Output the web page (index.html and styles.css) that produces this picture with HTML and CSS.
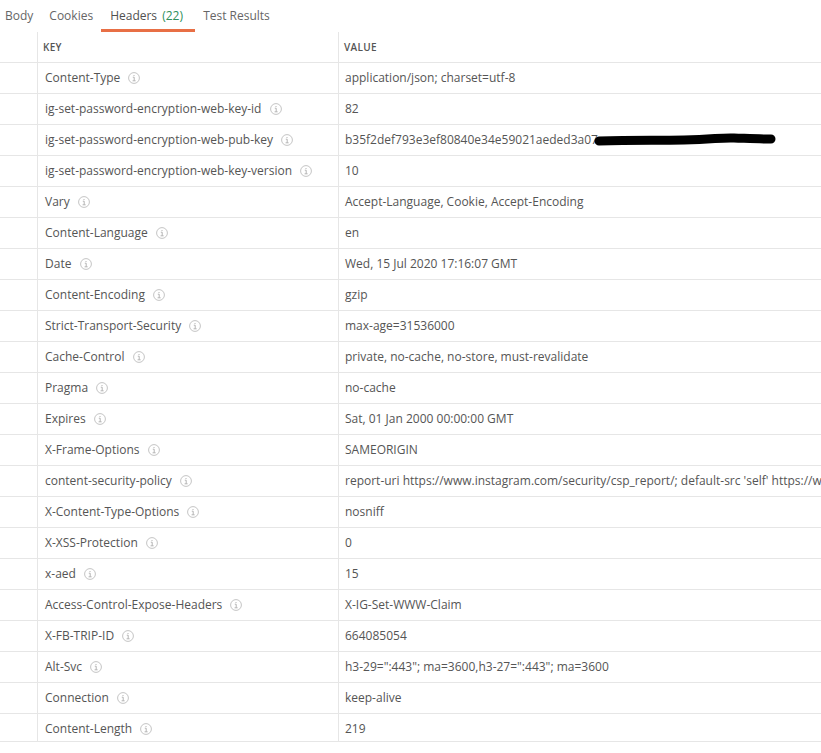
FILE: index.html

```html
<!DOCTYPE html>
<html lang="en">
<head>
  <meta charset="UTF-8">
  <meta name="viewport" content="width=device-width, initial-scale=1.0">
  <title>Response Headers</title>
  <link rel="stylesheet" href="styles.css">
</head>
<body>
  <svg width="0" height="0" class="defs">
    <symbol id="info" viewBox="0 0 12 12">
      <circle cx="6" cy="6" r="5.4" fill="none" stroke="#c4c4c4" stroke-width="1"/>
      <path d="M4.8 5.2H6.2V8.8M4.6 8.8H7.6M6 3V4" fill="none" stroke="#b4b4b4" stroke-width="1"/>
    </symbol>
  </svg>

  <nav class="tabs">
    <a class="tab">Body</a>
    <a class="tab">Cookies</a>
    <a class="tab active">Headers <span class="count">(22)</span></a>
    <a class="tab">Test Results</a>
  </nav>

  <div class="table">
    <div class="row head">
      <div class="gutter"></div>
      <div class="key">KEY</div>
      <div class="value">VALUE</div>
    </div>
    <div class="row"><div class="gutter"></div><div class="key">Content-Type <svg class="info"><use href="#info"/></svg></div><div class="value">application/json; charset=utf-8</div></div>
    <div class="row"><div class="gutter"></div><div class="key">ig-set-password-encryption-web-key-id <svg class="info"><use href="#info"/></svg></div><div class="value">82</div></div>
    <div class="row"><div class="gutter"></div><div class="key">ig-set-password-encryption-web-pub-key <svg class="info"><use href="#info"/></svg></div>
      <div class="value redacted">b35f2def793e3ef80840e34e59021aeded3a07
        <svg class="scribble" width="184" height="16" viewBox="0 0 184 16">
          <path d="M5 9C40 8 60 8.5 90 8S125 5.5 140 6S165 7 177 7" fill="none" stroke="#000" stroke-width="9" stroke-linecap="round"/>
        </svg>
      </div>
    </div>
    <div class="row"><div class="gutter"></div><div class="key">ig-set-password-encryption-web-key-version <svg class="info"><use href="#info"/></svg></div><div class="value">10</div></div>
    <div class="row"><div class="gutter"></div><div class="key">Vary <svg class="info"><use href="#info"/></svg></div><div class="value">Accept-Language, Cookie, Accept-Encoding</div></div>
    <div class="row"><div class="gutter"></div><div class="key">Content-Language <svg class="info"><use href="#info"/></svg></div><div class="value">en</div></div>
    <div class="row"><div class="gutter"></div><div class="key">Date <svg class="info"><use href="#info"/></svg></div><div class="value">Wed, 15 Jul 2020 17:16:07 GMT</div></div>
    <div class="row"><div class="gutter"></div><div class="key">Content-Encoding <svg class="info"><use href="#info"/></svg></div><div class="value">gzip</div></div>
    <div class="row"><div class="gutter"></div><div class="key">Strict-Transport-Security <svg class="info"><use href="#info"/></svg></div><div class="value">max-age=31536000</div></div>
    <div class="row"><div class="gutter"></div><div class="key">Cache-Control <svg class="info"><use href="#info"/></svg></div><div class="value">private, no-cache, no-store, must-revalidate</div></div>
    <div class="row"><div class="gutter"></div><div class="key">Pragma <svg class="info"><use href="#info"/></svg></div><div class="value">no-cache</div></div>
    <div class="row"><div class="gutter"></div><div class="key">Expires <svg class="info"><use href="#info"/></svg></div><div class="value">Sat, 01 Jan 2000 00:00:00 GMT</div></div>
    <div class="row"><div class="gutter"></div><div class="key">X-Frame-Options <svg class="info"><use href="#info"/></svg></div><div class="value">SAMEORIGIN</div></div>
    <div class="row"><div class="gutter"></div><div class="key">content-security-policy <svg class="info"><use href="#info"/></svg></div><div class="value">report-uri https://www.instagram.com/security/csp_report/; default-src 'self' https://w</div></div>
    <div class="row"><div class="gutter"></div><div class="key">X-Content-Type-Options <svg class="info"><use href="#info"/></svg></div><div class="value">nosniff</div></div>
    <div class="row"><div class="gutter"></div><div class="key">X-XSS-Protection <svg class="info"><use href="#info"/></svg></div><div class="value">0</div></div>
    <div class="row"><div class="gutter"></div><div class="key">x-aed <svg class="info"><use href="#info"/></svg></div><div class="value">15</div></div>
    <div class="row"><div class="gutter"></div><div class="key">Access-Control-Expose-Headers <svg class="info"><use href="#info"/></svg></div><div class="value">X-IG-Set-WWW-Claim</div></div>
    <div class="row"><div class="gutter"></div><div class="key">X-FB-TRIP-ID <svg class="info"><use href="#info"/></svg></div><div class="value">664085054</div></div>
    <div class="row"><div class="gutter"></div><div class="key">Alt-Svc <svg class="info"><use href="#info"/></svg></div><div class="value">h3-29=":443"; ma=3600,h3-27=":443"; ma=3600</div></div>
    <div class="row"><div class="gutter"></div><div class="key">Connection <svg class="info"><use href="#info"/></svg></div><div class="value">keep-alive</div></div>
    <div class="row last"><div class="gutter"></div><div class="key">Content-Length <svg class="info"><use href="#info"/></svg></div><div class="value">219</div></div>
  </div>
</body>
</html>
```

FILE: styles.css

```css
html, body {
  margin: 0;
  padding: 0;
  background-color: #fff;
  overflow: hidden;
}

body {
  font-family: "Open Sans", "Noto Sans", sans-serif;
  font-size: 12px;
  color: #555;
  height: 753px;
}

.defs {
  display: block;
  height: 0;
}

.tabs {
  display: flex;
  height: 32px;
  padding-left: 5px;
  gap: 16px;
  color: #666;
}

.tab {
  height: 32px;
  line-height: 32px;
  box-sizing: border-box;
}

.tab.active {
  color: #505050;
  margin: 0 -8px;
  padding: 0 9px;
  border-bottom: 3px solid #e86f45;
  width: 94px;
}

.count {
  color: #2f8f5b;
  margin-left: 2px;
}

.row {
  display: grid;
  grid-template-columns: 37px 301px 1fr;
  height: 31px;
  box-sizing: border-box;
  border-bottom: 1px solid #e6e6e6;
  line-height: 30px;
}

.row.last {
  height: 28px;
}

.row.head {
  font-size: 10px;
  font-weight: 600;
  color: #555;
  letter-spacing: 0.3px;
}

.key, .value {
  border-left: 1px solid #e6e6e6;
  white-space: nowrap;
  overflow: hidden;
}

.key {
  padding-left: 7px;
}

.value {
  padding-left: 6px;
}

.head .key, .head .value {
  padding-left: 5px;
}

.info {
  width: 12px;
  height: 12px;
  margin-left: 5px;
  vertical-align: -2px;
}

.redacted {
  position: relative;
}

.scribble {
  position: absolute;
  left: 255px;
  top: 7px;
}
```
